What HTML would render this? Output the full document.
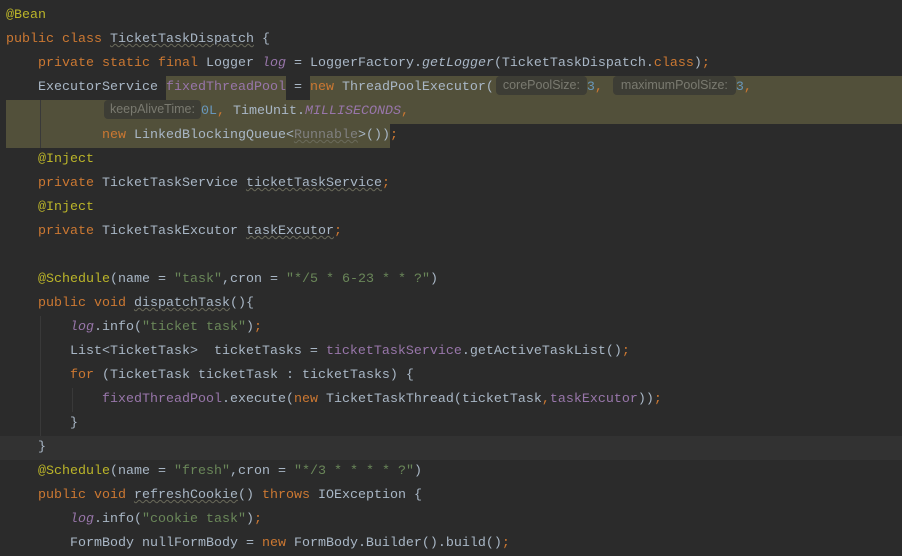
<!DOCTYPE html><html><head><style>
body{margin:0;width:902px;height:556px;background:#2b2b2b;overflow:hidden;position:relative;font-family:"Liberation Mono",monospace;font-size:13.33px;color:#a9b7c6}
.l{position:absolute;left:6px;height:24px;line-height:24px;white-space:pre}
.k{color:#cc7832}.f{color:#9876aa}.s{color:#6a8759}.n{color:#6897bb}.a{color:#bbb529}.i{font-style:italic}
.w{text-decoration:underline wavy #6a6a5a;text-decoration-thickness:1px}
.h{display:inline-block;height:19px;line-height:19px;vertical-align:1px;background:#3d3d35;color:#7a7a70;border-radius:4px;font-family:"Liberation Sans",sans-serif;font-size:12.5px;text-align:center;box-sizing:border-box}
.bg{position:absolute;background:#52503a}
.g{position:absolute;width:1px;background:#393939}
</style></head><body>
<div style="position:absolute;left:0;top:436px;width:902px;height:24px;background:#323232"></div>
<div class="bg" style="left:166px;top:76px;width:120px;height:24px"></div>
<div class="bg" style="left:310px;top:76px;width:592px;height:24px"></div>
<div class="bg" style="left:6px;top:100px;width:896px;height:24px"></div>
<div class="bg" style="left:6px;top:124px;width:384px;height:24px"></div>
<div class="g" style="left:40px;top:100px;height:48px"></div>
<div class="g" style="left:40px;top:316px;height:120px"></div>
<div class="g" style="left:72px;top:388px;height:24px"></div>
<div class="l" style="top:4px"><span class="a">@Bean</span></div>
<div class="l" style="top:28px"><span class="k">public class </span><span class="w">TicketTaskDispatch</span> {</div>
<div class="l" style="top:52px">    <span class="k">private static final </span>Logger <span class="f i">log</span> = LoggerFactory.<span class="i">getLogger</span>(TicketTaskDispatch.<span class="k">class</span>)<span class="k">;</span></div>
<div class="l" style="top:76px">    ExecutorService <span class="f">fixedThreadPool</span> = <span class="k">new </span>ThreadPoolExecutor(<span class="h" style="width:91px;margin-left:2px">corePoolSize:</span><span class="n">3</span><span class="k">, </span><span class="h" style="width:123px;margin-left:2px">maximumPoolSize:</span><span class="n">3</span><span class="k">,</span></div>
<div class="l" style="top:100px">            <span class="h" style="width:97px;margin-left:2px">keepAliveTime:</span><span class="n">0L</span><span class="k">, </span>TimeUnit.<span class="f i">MILLISECONDS</span><span class="k">,</span></div>
<div class="l" style="top:124px">            <span class="k">new </span>LinkedBlockingQueue&lt;<span class="w" style="color:#808080">Runnable</span>&gt;())<span class="k">;</span></div>
<div class="l" style="top:148px">    <span class="a">@Inject</span></div>
<div class="l" style="top:172px">    <span class="k">private </span>TicketTaskService <span class="w">ticketTaskService</span><span class="k">;</span></div>
<div class="l" style="top:196px">    <span class="a">@Inject</span></div>
<div class="l" style="top:220px">    <span class="k">private </span>TicketTaskExcutor <span class="w">taskExcutor</span><span class="k">;</span></div>
<div class="l" style="top:268px">    <span class="a">@Schedule</span>(name = <span class="s">"task"</span>,cron = <span class="s">"*/5 * 6-23 * * ?"</span>)</div>
<div class="l" style="top:292px">    <span class="k">public void </span><span class="w">dispatchTask</span>(){</div>
<div class="l" style="top:316px">        <span class="f i">log</span>.info(<span class="s">"ticket task"</span>)<span class="k">;</span></div>
<div class="l" style="top:340px">        List&lt;TicketTask&gt;  ticketTasks = <span class="f">ticketTaskService</span>.getActiveTaskList()<span class="k">;</span></div>
<div class="l" style="top:364px">        <span class="k">for </span>(TicketTask ticketTask : ticketTasks) {</div>
<div class="l" style="top:388px">            <span class="f">fixedThreadPool</span>.execute(<span class="k">new </span>TicketTaskThread(ticketTask<span class="k">,</span><span class="f">taskExcutor</span>))<span class="k">;</span></div>
<div class="l" style="top:412px">        }</div>
<div class="l" style="top:436px">    }</div>
<div class="l" style="top:460px">    <span class="a">@Schedule</span>(name = <span class="s">"fresh"</span>,cron = <span class="s">"*/3 * * * * ?"</span>)</div>
<div class="l" style="top:484px">    <span class="k">public void </span><span class="w">refreshCookie</span>() <span class="k">throws </span>IOException {</div>
<div class="l" style="top:508px">        <span class="f i">log</span>.info(<span class="s">"cookie task"</span>)<span class="k">;</span></div>
<div class="l" style="top:532px">        FormBody nullFormBody = <span class="k">new </span>FormBody.Builder().build()<span class="k">;</span></div>
</body></html>
